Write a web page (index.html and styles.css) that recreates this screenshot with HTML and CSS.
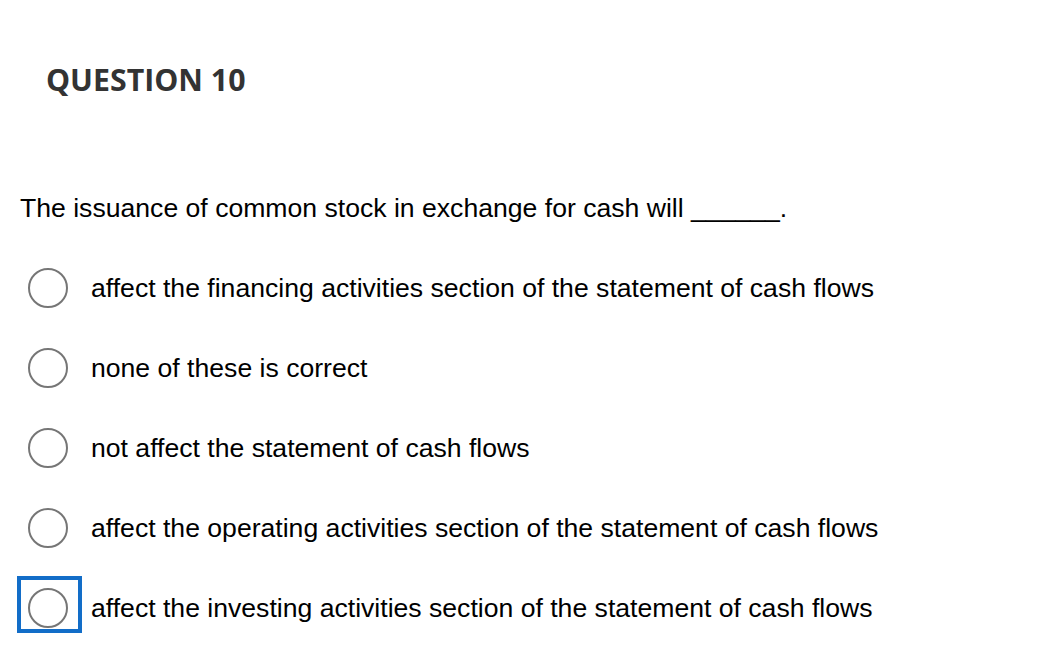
FILE: index.html
```html
<!DOCTYPE html>
<html lang="en">
<head>
<meta charset="utf-8">
<title>Question 10</title>
<link rel="stylesheet" href="styles.css">
</head>
<body>
<main class="question">
  <h2 class="question-title">QUESTION 10</h2>
  <p class="question-text">The issuance of common stock in exchange for cash will ______.</p>
  <ul class="options">
    <li class="option"><span class="radio"></span><span class="label">affect the financing activities section of the statement of cash flows</span></li>
    <li class="option"><span class="radio"></span><span class="label">none of these is correct</span></li>
    <li class="option"><span class="radio"></span><span class="label">not affect the statement of cash flows</span></li>
    <li class="option"><span class="radio"></span><span class="label">affect the operating activities section of the statement of cash flows</span></li>
    <li class="option"><span class="radio focused"></span><span class="label">affect the investing activities section of the statement of cash flows</span></li>
  </ul>
</main>
</body>
</html>
```

FILE: styles.css
```css
html, body {
  margin: 0;
  padding: 0;
  background: #ffffff;
}

.question {
  padding-top: 60px;
  padding-bottom: 40px;
}

.question-title {
  margin: 0;
  padding-left: 46px;
  font-family: "Open Sans", "Noto Sans", sans-serif;
  font-weight: 700;
  font-size: 30.3px;
  line-height: 40px;
  color: #333333;
}

.question-text {
  margin: 92px 0 0 0;
  padding-left: 20px;
  font-family: "Liberation Sans", Arial, sans-serif;
  font-size: 26.6px;
  line-height: 32px;
  color: #000000;
}

.options {
  list-style: none;
  margin: 44px 0 0 0;
  padding: 0 0 0 28px;
  display: flex;
  flex-direction: column;
  gap: 40px;
}

.option {
  display: flex;
  align-items: center;
  height: 40px;
  gap: 23px;
}

.radio {
  position: relative;
  flex: none;
  box-sizing: border-box;
  width: 40px;
  height: 40px;
  border: 2px solid #767676;
  border-radius: 50%;
  background: #ffffff;
}

.radio.focused::after {
  content: "";
  position: absolute;
  top: -14px;
  left: -13px;
  right: -16px;
  bottom: -7px;
  border: 4px solid #126dc8;
}

.label {
  font-family: "Liberation Sans", Arial, sans-serif;
  font-size: 26.6px;
  line-height: 40px;
  color: #000000;
}
```
